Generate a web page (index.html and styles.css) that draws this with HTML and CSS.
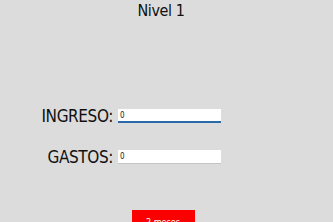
FILE: index.html
```html
<!DOCTYPE html>
<html>
<head>
	<title>Nivel 1</title>
	<link rel="stylesheet" href="styles.css">
</head>
<body>

	<div class="screen">
		<h1 class="title">Nivel 1</h1>

		<div class="form">
			<div class="row">
				<label class="label" for="ingreso">INGRESO:</label>
				<input class="field active" id="ingreso" type="text" value="0">
			</div>
			<div class="row">
				<label class="label" for="gastos">GASTOS:</label>
				<input class="field" id="gastos" type="text" value="0">
			</div>
		</div>

		<div class="actions">
			<button class="btn">2 meses</button>
		</div>
	</div>

</body>
</html>
```

FILE: styles.css
```css
html, body{
	margin: 0;
	height: 100%;
	overflow: hidden;
}
body{
	background-color: #dcdcdc;
	font-family: "DejaVu Sans Condensed", "DejaVu Sans", sans-serif;
	color: #111;
}
.screen{
	display: flex;
	flex-direction: column;
	width: 322px;
	height: 100%;
}
.title{
	margin: 0;
	padding-top: 1px;
	font-size: 16px;
	font-weight: normal;
	line-height: 20px;
	letter-spacing: -0.4px;
	text-align: center;
}
.form{
	display: flex;
	flex-direction: column;
	gap: 26px;
	margin-top: 87px;
}
.row{
	display: flex;
	align-items: flex-end;
}
.label{
	width: 113px;
	margin-bottom: -2px;
	font-size: 17px;
	line-height: 17px;
	letter-spacing: -0.4px;
	text-align: right;
}
.field{
	width: 103px;
	height: 14px;
	margin-left: 5px;
	padding: 0 2px;
	border: 0;
	border-bottom: 1px solid #c4c4c4;
	background-color: #fff;
	font-family: inherit;
	font-size: 8px;
	color: #222;
	outline: none;
	box-sizing: border-box;
}
.field.active{
	border-bottom: 2px solid #2a6aa8;
}
.actions{
	display: flex;
	justify-content: center;
	margin-top: 46px;
	padding-left: 4px;
}
.btn{
	width: 63px;
	padding: 6px 0 6px;
	border: 0;
	background-color: #fa0000;
	color: #fff;
	font-family: inherit;
	font-size: 9px;
	line-height: 12px;
}
```
